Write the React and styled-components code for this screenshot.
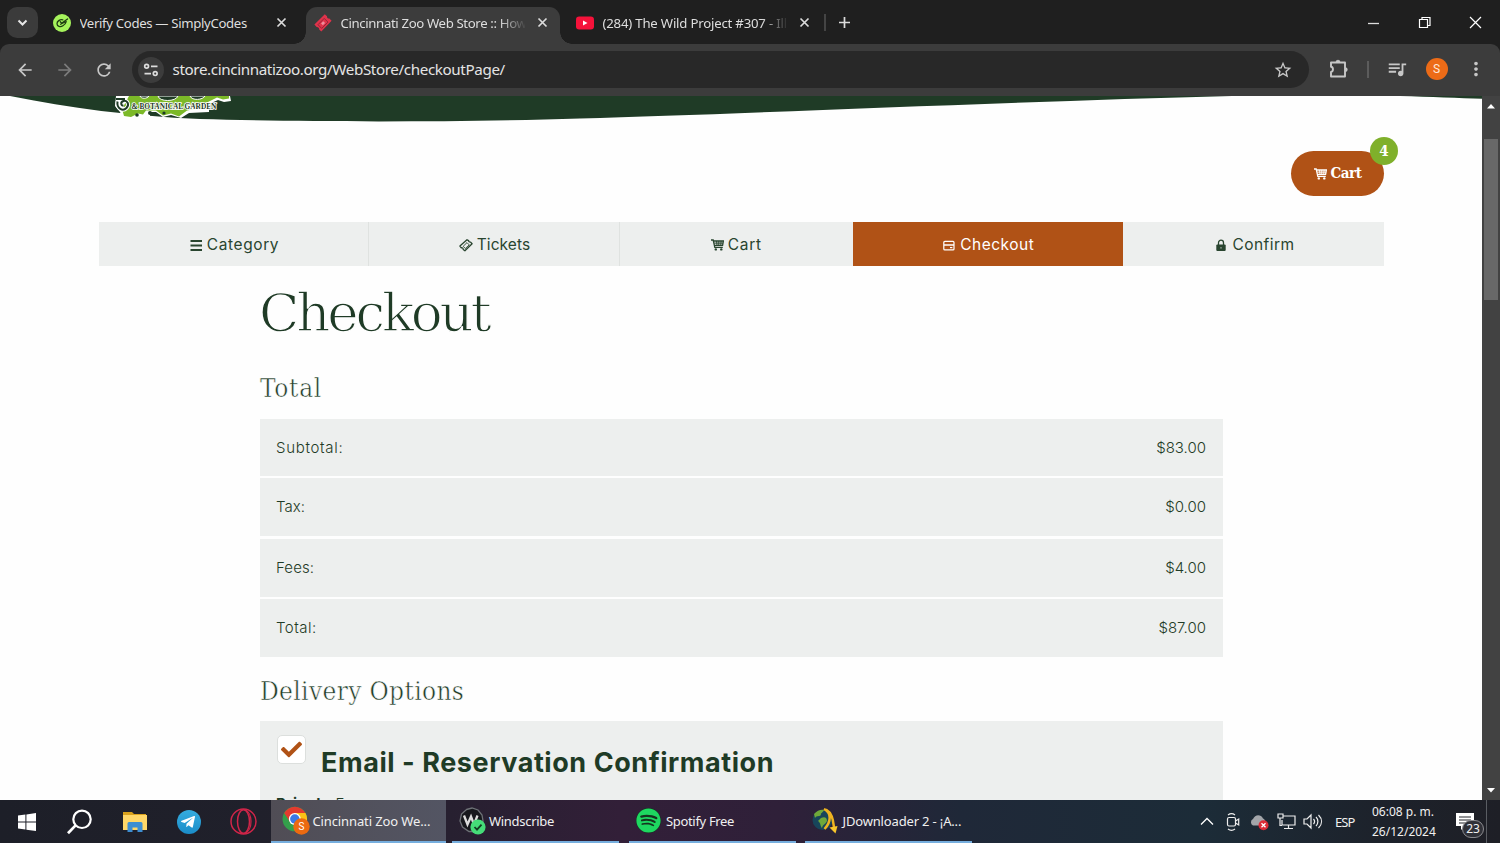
import React from "react";
import styled, { createGlobalStyle, css } from "styled-components";
import {
  MdArrowBack, MdArrowForward, MdRefresh, MdStarBorder, MdQueueMusic, MdMoreVert,
} from "react-icons/md";
import { FaSpotify, FaTelegramPlane, FaCheck } from "react-icons/fa";

const ui = `"Noto Sans", "Open Sans", sans-serif`;
const body = `Inter, Lato, sans-serif`;
const slab = `"DejaVu Serif Condensed", "DejaVu Serif", serif`;
const slabWide = `"DejaVu Serif", serif`;
const green = "#1f3b26";
const orange = "#b05216";
const panel = "#edefee";

const GlobalStyle = createGlobalStyle`
  *, *::before, *::after { box-sizing: border-box; }
  body { margin: 0; background: #fff; overflow: hidden; }
  svg { display: block; flex: none; }
`;

const Screen = styled.div`
  width: 1500px;
  height: 843px;
  display: flex;
  flex-direction: column;
  overflow: hidden;
`;

/* ---------- browser tabs ---------- */
const TabStrip = styled.div`
  height: 44px;
  flex: none;
  display: flex;
  align-items: flex-start;
  background: #1f1f1f;
  padding-left: 7px;
  color: #dedede;
  font-family: ${ui};
`;
const TabSearch = styled.div`
  width: 31px;
  height: 31px;
  margin-top: 7px;
  border-radius: 10px;
  background: #3b3b3b;
  display: grid;
  place-items: center;
`;
const Tab = styled.div`
  position: relative;
  width: ${(p) => p.$w}px;
  height: ${(p) => (p.$active ? 37 : 31)}px;
  margin: 7px 0 0 ${(p) => p.$ml}px;
  padding: 0 ${(p) => p.$pr || 10}px 0 ${(p) => p.$pl}px;
  display: flex;
  align-items: center;
  ${(p) => p.$active && css`
    background: #3c3c3c;
    border-radius: 11px 11px 0 0;
    padding-bottom: 6px;
    &::before, &::after {
      content: "";
      position: absolute;
      bottom: 0;
      width: 12px;
      height: 12px;
    }
    &::before { left: -12px; background: radial-gradient(circle at 0 0, transparent 11.5px, #3c3c3c 12px); }
    &::after { right: -12px; background: radial-gradient(circle at 100% 0, transparent 11.5px, #3c3c3c 12px); }
  `}
`;
const TabTitle = styled.div`
  width: ${(p) => p.$w}px;
  margin-left: 8.5px;
  padding-top: 1px;
  font-size: 13.2px;
  line-height: 31px;
  letter-spacing: ${(p) => p.$ls || 0}px;
  white-space: nowrap;
  overflow: hidden;
  ${(p) => p.$fade && css`mask-image: linear-gradient(90deg, #000 86%, transparent 101%);`}
`;
const TabClose = styled.div`
  margin-left: auto;
`;
const TabDivider = styled.div`
  width: 2px;
  height: 17px;
  margin: 14px 11px 0 4px;
  background: #444;
`;
const NewTab = styled.div`
  margin-top: 15px;
`;
const WindowButtons = styled.div`
  margin: 14px 17px 0 auto;
  display: flex;
  gap: 37px;
`;

/* ---------- browser toolbar ---------- */
const ToolbarBack = styled.div`
  flex: none;
  background: #1f1f1f;
`;
const Toolbar = styled.div`
  height: 52px;
  display: flex;
  align-items: center;
  background: #3c3c3c;
  border-radius: 9px 9px 0 0;
  padding: 0 12px 1px 15px;
  color: #c7c7c7;
`;
const NavButtons = styled.div`
  display: flex;
  gap: 19.5px;
`;
const Dim = styled.div`
  color: #7c7c7c;
`;
const Omnibox = styled.div`
  width: 1177px;
  height: 37px;
  margin-left: 18px;
  padding: 0 16px 0 6px;
  border-radius: 19px;
  background: #282828;
  display: flex;
  align-items: center;
`;
const SiteInfo = styled.div`
  width: 26px;
  height: 26px;
  border-radius: 50%;
  background: #3c3c3c;
  display: grid;
  place-items: center;
`;
const Url = styled.div`
  margin-left: 8.5px;
  padding-bottom: 1px;
  flex: 1;
  font: 15.2px/22px ${ui};
  letter-spacing: ${(p) => p.$ls}px;
  color: #e4e4e4;
`;
const ToolbarActions = styled.div`
  flex: 1;
  display: flex;
  align-items: center;
  justify-content: space-between;
  padding: 0 1px 1px 20px;
`;
const ToolbarDivider = styled.div`
  width: 2px;
  height: 17px;
  background: #5c5c5c;
`;
const Avatar = styled.div`
  width: 22px;
  height: 22px;
  border-radius: 50%;
  background: #ec6b17;
  color: #ffe9da;
  display: grid;
  place-items: center;
  font: 12px/1 Roboto, sans-serif;
`;

/* ---------- page ---------- */
const Viewport = styled.div`
  flex: 1;
  min-height: 0;
  display: flex;
  overflow: hidden;
`;
const Page = styled.div`
  width: 1482px;
  background: #fefefe;
  overflow: hidden;
  color: ${green};
`;
const Banner = styled.div`
  position: relative;
  height: 26px;
`;
const Logo = styled.div`
  position: absolute;
  left: 114px;
  top: 0;
`;
const CartRow = styled.div`
  display: flex;
  justify-content: flex-end;
  padding: 29px 98px 26.5px 0;
`;
const CartButton = styled.div`
  position: relative;
  width: 93px;
  height: 44.5px;
  border-radius: 22.5px;
  background: ${orange};
  color: #fff;
  display: flex;
  align-items: center;
  justify-content: center;
  gap: 4px;
  font: bold 15px/1 ${slab};
  letter-spacing: -0.5px;
`;
const Badge = styled.div`
  position: absolute;
  right: -14px;
  top: -14px;
  width: 28px;
  height: 28px;
  border-radius: 50%;
  background: #7fb02b;
  display: grid;
  place-items: center;
  letter-spacing: 0;
`;
const Steps = styled.div`
  display: flex;
  width: 1285px;
  height: 44px;
  margin-left: 99px;
`;
const Step = styled.div`
  width: ${(p) => p.$w}px;
  padding: 1px 0 0 ${(p) => p.$pl || 0}px;
  display: flex;
  align-items: center;
  justify-content: center;
  gap: ${(p) => p.$gap || 4}px;
  background: ${(p) => (p.$active ? orange : panel)};
  color: ${(p) => (p.$active ? "#fff" : "#29452f")};
  border-right: ${(p) => (p.$line ? "1px solid #dfe2e0" : "0")};
  font: 15.5px/1 ${body};
  letter-spacing: ${(p) => p.$ls || 0}px;
`;
const Main = styled.div`
  width: 963px;
  margin-left: 260px;
`;
const Title = styled.h1`
  margin: 0 0 0 -1px;
  padding-top: 15px;
  height: 102px;
  font: 400 53px/64px ${slabWide};
  letter-spacing: -3.2px;
  -webkit-text-stroke: 1.3px #fefefe;
`;
const Heading = styled.h2`
  margin: 0;
  height: ${(p) => p.$h}px;
  font: 400 26px/40px ${slab};
  letter-spacing: ${(p) => p.$ls}px;
  -webkit-text-stroke: 0.5px #fefefe;
`;
const Totals = styled.div`
  display: flex;
  flex-direction: column;
  gap: 2.5px;
  margin-bottom: 14px;
`;
const TotalRow = styled.div`
  height: ${(p) => p.$h}px;
  padding: 0 17px ${(p) => p.$pb}px 16px;
  display: flex;
  align-items: center;
  justify-content: space-between;
  background: ${panel};
  font: 300 15px/1 ${body};
`;
const RowLabel = styled.span`
  letter-spacing: ${(p) => p.$ls}px;
`;
const Delivery = styled.div`
  height: 120px;
  background: ${panel};
  padding: 14px 16px 0;
`;
const DeliveryOption = styled.div`
  display: flex;
  gap: 15px;
  padding-left: 1px;
`;
const CheckBox = styled.div`
  width: 29px;
  height: 29px;
  border: 1px solid #dcdfdd;
  border-radius: 5px;
  background: #fff;
  display: grid;
  place-items: center;
`;
const OptionName = styled.div`
  font: 700 27px/36px ${body};
  letter-spacing: ${(p) => p.$ls}px;
  padding-top: 10px;
`;
const OptionPrice = styled.div`
  margin-top: 13px;
  font: 300 15px/20px ${body};
  b { font-weight: 700; letter-spacing: 0.5px; }
`;
const ScrollBar = styled.div`
  width: 18px;
  background: #424242;
  display: flex;
  flex-direction: column;
  align-items: center;
  padding: 8px 0 7px;
`;
const Thumb = styled.div`
  width: 14px;
  height: 161px;
  margin: 30px 0 auto;
  background: #686868;
`;

/* ---------- taskbar ---------- */
const Taskbar = styled.div`
  height: 43px;
  flex: none;
  display: flex;
  background: linear-gradient(90deg, #1d1f28 0, #20202b 260px, #272030 450px, #321f38 620px, #2f2039 780px, #1f2838 960px, #1c2c38 1200px, #1d222b 1380px, #1e1f26 1500px);
  color: #f0f0f0;
  font-family: ${ui};
`;
const Pinned = styled.div`
  width: 54px;
  display: grid;
  place-items: center;
`;
const PinnedGroup = styled.div`
  display: flex;
  width: 271px;
`;
const Task = styled.div`
  width: ${(p) => p.$w}px;
  margin-right: ${(p) => p.$mr}px;
  padding-left: ${(p) => p.$pl}px;
  display: flex;
  align-items: center;
  gap: ${(p) => p.$gap || 3}px;
  border-bottom: 2px solid #76aede;
  background: ${(p) => (p.$active ? "linear-gradient(90deg,#504d55,#535563)" : "transparent")};
  font-size: 13px;
  line-height: 20px;
  letter-spacing: ${(p) => p.$ls || 0}px;
  white-space: nowrap;
`;
const Tray = styled.div`
  margin-left: auto;
  display: flex;
  align-items: center;
`;
const TrayIcons = styled.div`
  display: flex;
  align-items: center;
  gap: 7px;
`;
const Lang = styled.div`
  width: 21px;
  margin-left: 12px;
  font-size: 13px;
  letter-spacing: -0.9px;
`;
const Clock = styled.div`
  width: 66px;
  margin: 0 18px 0 16px;
  font-size: 12px;
  line-height: 20px;
  text-align: left;
  white-space: nowrap;
`;
const Notice = styled.div`
  position: relative;
  width: 30px;
  height: 43px;
  padding-top: 13px;
`;
const NoticeCount = styled.div`
  position: absolute;
  left: 6px;
  top: 20px;
  width: 22px;
  height: 18px;
  border-radius: 9px;
  border: 1px solid #8b8b8f;
  background: #303138;
  font-size: 12px;
  line-height: 16px;
  text-align: center;
`;
const ShowDesktop = styled.div`
  width: 14px;
  height: 43px;
  border-left: 1px solid #5a5d63;
  align-self: stretch;
`;

/* ---------- drawings ---------- */
const Close = () => (
  <svg width="11" height="11" viewBox="0 0 11 11" stroke="#dcdcdc" strokeWidth="1.7"><path d="M1.500 1.500l8 8M9.500 1.500l-8 8" /></svg>
);
const CartIcon = ({ size = 13 }) => (
  <svg width={size} height={size} viewBox="0 0 13 13" fill="none" stroke="currentColor" strokeWidth="1.300">
    <path d="M0 2h2.200l1.600 7.300h8" /><path d="M2.700 3h9.700l-.8 4.300H3.600" /><path d="M3.200 5.100h8.800M5.600 3l.4 4M7.800 3v4M10.100 3l-.3 4" strokeWidth="1" />
    <circle cx="4.800" cy="11.400" r="1.200" fill="currentColor" stroke="none" /><circle cx="10.300" cy="11.400" r="1.200" fill="currentColor" stroke="none" />
  </svg>
);
const MenuIcon = () => (
  <svg width="12" height="12" viewBox="0 0 12 12" fill="currentColor"><path d="M.5 1h11.500v2H.5zM.5 5.500h11.500v2H.5zM.5 10h11.500v2H.5z" /></svg>
);
const TicketIcon = () => (
  <svg width="14" height="14" viewBox="0 0 14 14" fill="none" stroke="currentColor" strokeWidth="1.300" strokeLinejoin="round">
    <path d="M.9 8.100L8 1.700l1.600.9c.1 1.100.9 1.700 2 1.500l1.500 1.700-7.200 7-1.700-1.300c.1-1.200-.8-1.900-1.900-1.700z" />
    <path d="M4.200 8.300L8 4.600l2.200 2.300-3.900 3.600z" strokeWidth=".9" />
  </svg>
);
const CardIcon = () => (
  <svg width="12" height="12" viewBox="0 0 12 12" fill="none" stroke="currentColor" strokeWidth="1.200">
    <rect x=".8" y="2.400" width="10.200" height="8.500" rx="1" /><path d="M1 6h10" strokeWidth="1.500" /><path d="M7 8.600h2.400" />
  </svg>
);
const LockIcon = () => (
  <svg width="10" height="12" viewBox="0 0 10 12"><path d="M2.500 6V3.700a2.500 2.500 0 015 0V6" fill="none" stroke="currentColor" strokeWidth="1.300" /><rect x=".3" y="5.500" width="9.400" height="6.500" rx="1" fill="currentColor" /><path d="M4 8.900h2" stroke="#9aa69d" /></svg>
);
const TuneIcon = () => (
  <svg width="16" height="16" viewBox="0 0 16 16" fill="none" stroke="#dcdcdc" strokeWidth="1.700">
    <circle cx="3.600" cy="4.300" r="1.900" /><path d="M8 4.300h6.500M1.500 11.600H8" /><circle cx="12.200" cy="11.600" r="1.900" />
  </svg>
);
const PuzzleIcon = () => (
  <svg width="20" height="20" viewBox="0 0 20 20" fill="none" stroke="currentColor" strokeWidth="1.900" strokeLinejoin="round">
    <path d="M2 3.500h14v14H2v-4.600c2.600-.2 2.600-5 0-5.200z" /><path d="M6.800 3.200a2.200 2.200 0 014.400 0zM16.300 8.400a2.200 2.200 0 010 4.400z" fill="currentColor" strokeWidth=".3" />
  </svg>
);
const SimplyIcon = () => (
  <svg width="18" height="18" viewBox="0 0 18 18"><circle cx="9" cy="9" r="9" fill="#a6f35c" />
    <path d="M14.500 5L8.600 9.300 7.300 7.800M9.800 5.800C6.700 5.300 4 7.200 4 9.700c0 2.700 3.500 3.600 5.900 2.100 1.800-1.100 2.900-2.600 3.300-4.200M7.600 10.300l4.400-2.400" fill="none" stroke="#1f3d12" strokeWidth="1.300" strokeLinecap="round" /></svg>
);
const ZooTicket = () => (
  <svg width="18" height="18" viewBox="0 0 18 18"><path d="M.4 10.600L10.800.3l2.200 2c-.2 1.400 1 2.500 2.400 2.300l2.200 2.200L7.300 17.600l-2.100-2.100c.2-1.500-1-2.600-2.500-2.500z" fill="#e0334b" />
    <path d="M4 10.700l6.200-6.300 3.700 3.700-6.200 6.300z" fill="none" stroke="#8a2435" strokeWidth=".9" /><path d="M7 9.400l2.200-2.200 1.900 1.900-2.200 2.200z" fill="#ee8e9b" /></svg>
);
const YouTube = () => (
  <svg width="18" height="14" viewBox="0 0 18 14"><rect width="18" height="13" y=".5" rx="3.200" fill="#f5123a" /><path d="M7 4.500v5L11.500 7z" fill="#fff" /></svg>
);
const BannerWave = () => (
  <svg width="1482" height="26" viewBox="0 0 1482 26">
    <path d="M10 0C70 12 130 20 200 23C300 26 450 26.500 580 22.500C740 18 1000 6 1232 0z" fill={green} />
    <path d="M1400 0C1430 1 1460 2 1482 2.800V0z" fill={green} />
  </svg>
);
const LogoText = styled.text`
  font: bold 7.5px "Liberation Serif", serif;
`;
const ZooLogo = () => (
  <svg width="118" height="24" viewBox="0 0 118 24">
    <path d="M2 0H116l1 5-7 1-6-2-9 4v8l-20 1-8 5-10-3-8 2-7-5-6 0 0 5-7 1-5-2-7 3-8-1-3-6-5-6z" fill="#fff" />
    <path d="M15 0H115v2.500l-6 1-6-2-10 5-4 5-16 3-8 6-8-3-8 2-7-5-6 0-4 0-3 4-5-1-7 3.500-7-1-2-7z" fill="#7cb928" />
    <path d="M26 0c1 3 7 3 9 0zM44 0c1 6 18 6 20 0zM76 0c2 5 13 4 15 0z" fill={green} stroke="#fff" strokeWidth="1" />
    <circle cx="36" cy="17" r="2" fill={green} /><circle cx="23" cy="19" r="1.800" fill={green} /><circle cx="50" cy="17" r="1.600" fill={green} />
    <path d="M2 3h9M3.500 5.500C2.500 13 9 15.500 12.500 12S13 4 9.500 5 7 10 9.500 9.500" fill="none" stroke="#fff" strokeWidth="4" />
    <path d="M2 3h9M3.500 5.500C2.500 13 9 15.500 12.500 12S13 4 9.500 5 7 10 9.500 9.500" fill="none" stroke={green} strokeWidth="2" />
    <LogoText x="17.500" y="13.400" textLength="85" fill={green} stroke="#fff" strokeWidth="1.600" paintOrder="stroke">&amp; BOTANICAL GARDEN</LogoText>
  </svg>
);
const Windows = () => (
  <svg width="18" height="18" viewBox="0 0 18 18" fill="#fff"><path d="M0 2.600l7.400-1v7H0zM8.400 1.400L18 0v8.600H8.400zM0 9.600h7.400v7L0 15.500zM8.400 9.600H18V18l-9.600-1.300z" /></svg>
);
const SearchIcon = () => (
  <svg width="30" height="26" viewBox="0 0 30 26" fill="none" stroke="#fff" strokeWidth="2.200"><circle cx="16" cy="10.300" r="8.700" /><path d="M9.600 16.400L2 24.300" strokeWidth="2.700" /></svg>
);
const Folder = () => (
  <svg width="24" height="22" viewBox="0 0 24 22"><path d="M0 1h9l2 2h12v5H0z" fill="#d9a11c" /><path d="M0 4h24v15H0z" fill="#ffd768" /><path d="M4.500 21v-8.500q0-1.500 1.500-1.500h12q1.500 0 1.500 1.500V21h-5v-4.500h-5V21z" fill="#3d8ed2" /></svg>
);
const TelegramBall = styled.div`
  width: 24px;
  height: 24px;
  border-radius: 50%;
  background: linear-gradient(#35acdf, #1b8dc9);
  color: #fff;
  display: grid;
  place-items: center;
  padding-right: 2px;
`;
const Opera = () => (
  <svg width="27" height="27" viewBox="0 0 27 27" fill="none" stroke="#d02549" strokeWidth="1.500"><circle cx="13.500" cy="13.500" r="12.500" /><ellipse cx="13.500" cy="13.500" rx="6" ry="11.800" /><path d="M15 2c8 2 8 21 0 23" strokeWidth="1.200" /></svg>
);
const SvgLetter = styled.text`
  font: 10px Roboto, sans-serif;
`;
const Chrome = () => (
  <svg width="29" height="29" viewBox="0 0 29 29">
    <circle cx="12.800" cy="13" r="12.300" fill="#34a04b" /><path d="M2.200 6.900A12.300 12.300 0 0123.500 6.900H12.800L8 16z" fill="#e33b2e" /><path d="M12.800 6.900h10.700A12.300 12.300 0 0112.800 25.300l5.300-9.200z" fill="#fbc116" />
    <circle cx="12.800" cy="13" r="6" fill="#fff" /><circle cx="12.800" cy="13" r="4.700" fill="#3b79e6" />
    <circle cx="19.500" cy="20.500" r="8.200" fill="#ec6a10" /><SvgLetter x="16.600" y="24" fill="#fff">S</SvgLetter>
  </svg>
);
const Windscribe = () => (
  <svg width="27" height="28" viewBox="0 0 27 28"><path d="M7.500 2.500L13 1l6 2 4 5 1 6-3 7-6 3.500h-5L3.500 20 1 14l1.500-7z" fill="#17181d" stroke="#6e7277" strokeWidth="1.300" />
    <path d="M5 8.500l3.500 9 3.500-8 3 8 3.500-9" fill="none" stroke="#dcdcdc" strokeWidth="2.300" />
    <circle cx="19" cy="20" r="7.600" fill="#45dc78" /><path d="M15.500 20l2.500 2.600 4.500-5" fill="none" stroke="#123d22" strokeWidth="1.800" /></svg>
);
const JD = () => (
  <svg width="26" height="26" viewBox="0 0 26 26"><circle cx="10.500" cy="12" r="10" fill="#17455a" /><path d="M2 6c3-4 8-5 10-4-1 3-4 3-3 5-2 2-4 0-6 3zM9 10c4-2 6 0 6 3-2 4-4 3-5 7-2-2-1-5-4-7z" fill="#6fa83a" />
    <path d="M12 1c8 4 7 13 .5 20 M14 1.500c7 4 7 12 8 18" fill="none" stroke="#eeb320" strokeWidth="2.500" /><path d="M17.500 19.500l8-1.500-2 7.500z" fill="#f8c62b" /></svg>
);
const PlayBall = styled.div`
  width: 25px;
  height: 25px;
  border-radius: 50%;
  background: #15331f;
  color: #1ed760;
  display: grid;
  place-items: center;
`;
const TrayGlyphs = () => (
  <>
    <svg width="15" height="9" viewBox="0 0 15 9" fill="none" stroke="#fff" strokeWidth="1.300"><path d="M1 7.500l6-6 6 6" /></svg>
    <svg width="20" height="20" viewBox="0 0 20 20" fill="none" stroke="#eee" strokeWidth="1.200"><rect x="5.500" y="5.500" width="8" height="8.500" rx="1.500" /><path d="M13.500 9l3.200-2v6l-3.200-2M6 3c2-1.500 5-1.500 7 0M6 17c2 1.500 5 1.500 7 0" /></svg>
    <svg width="20" height="18" viewBox="0 0 20 18"><path d="M4 12.500a3.600 3.600 0 010-6.500C6 1 12 1 14 5.500c3 1 3 6.500 0 7z" fill="#a3a5a9" /><circle cx="14.500" cy="12.200" r="5" fill="#dc2c38" /><path d="M12.500 10.200l4 4M16.500 10.200l-4 4" stroke="#fff" strokeWidth="1.300" /></svg>
    <svg width="20" height="17" viewBox="0 0 20 17" fill="none" stroke="#eee" strokeWidth="1.200"><path d="M7 3h12v9H6V7M12.500 12v3.500M8 15.500h9M2 1h5v4H2zM4 5v7.500h2" /></svg>
    <svg width="20" height="17" viewBox="0 0 20 17" fill="none" stroke="#eee" strokeWidth="1.200"><path d="M1 6h3l4-4v13l-4-4H1zM10.500 6c1.300 1.500 1.300 3.500 0 5M13 4c2.500 2.500 2.500 6.500 0 9M15.500 2c4 4 4 9 0 13" /></svg>
  </>
);
const Arrow = ({ down }) => (
  <svg width="8" height="5" viewBox="0 0 8 5" fill="#fff"><path d={down ? "M0 0h8L4 4.500z" : "M0 4.500h8L4 0z"} /></svg>
);

export default function App() {
  return (
    <Screen>
      <GlobalStyle />
      <TabStrip>
        <TabSearch><svg width="11" height="8" viewBox="0 0 11 8" fill="none" stroke="#e6e6e6" strokeWidth="2"><path d="M1.500 1.500l4 4 4-4" /></svg></TabSearch>
        <Tab $w={254} $ml={5} $pl={10}><SimplyIcon /><TabTitle $w={180} $ls={-0.34}>Verify Codes — SimplyCodes</TabTitle><TabClose><Close /></TabClose></Tab>
        <Tab $w={254} $ml={9} $pl={8} $pr={12} $active><ZooTicket /><TabTitle $w={184} $ls={-0.36} $fade>Cincinnati Zoo Web Store :: How to</TabTitle><TabClose><Close /></TabClose></Tab>
        <Tab $w={260} $ml={0} $pl={16}><YouTube /><TabTitle $w={184} $ls={-0.2} $fade>(284) The Wild Project #307 - Illojuan</TabTitle><TabClose><Close /></TabClose></Tab>
        <TabDivider />
        <NewTab><svg width="15" height="15" viewBox="0 0 15 15" stroke="#dcdcdc" strokeWidth="1.700"><path d="M7.500 2v11M2 7.500h11" /></svg></NewTab>
        <WindowButtons>
          <svg width="14" height="16" viewBox="0 0 14 16" stroke="#ddd" strokeWidth="1.300"><path d="M1 9.500h11" /></svg>
          <svg width="14" height="16" viewBox="0 0 14 16" fill="none" stroke="#fff" strokeWidth="1.200"><path d="M1.500 5.500h8v8h-8zM4 5.500V3.500h8v8H9.500" /></svg>
          <svg width="14" height="16" viewBox="0 0 14 16" stroke="#fff" strokeWidth="1.200"><path d="M1 3l11 11M12 3l-11 11" /></svg>
        </WindowButtons>
      </TabStrip>
      <ToolbarBack>
        <Toolbar>
          <NavButtons><MdArrowBack size={20} /><Dim><MdArrowForward size={20} /></Dim><MdRefresh size={20} /></NavButtons>
          <Omnibox>
            <SiteInfo><TuneIcon /></SiteInfo>
            <Url $ls={-0.38}>store.cincinnatizoo.org/WebStore/checkoutPage/</Url>
            <MdStarBorder size={20} />
          </Omnibox>
          <ToolbarActions>
            <PuzzleIcon /><ToolbarDivider /><MdQueueMusic size={22} /><Avatar>S</Avatar><MdMoreVert size={22} />
          </ToolbarActions>
        </Toolbar>
      </ToolbarBack>
      <Viewport>
        <Page>
          <Banner><BannerWave /><Logo><ZooLogo /></Logo></Banner>
          <CartRow><CartButton><CartIcon /><span>Cart</span><Badge>4</Badge></CartButton></CartRow>
          <Steps>
            <Step $w={270} $ls={0.6} $pl={2} $gap={5} $line><MenuIcon />Category</Step>
            <Step $w={251} $ls={0.1} $pl={1} $line><TicketIcon />Tickets</Step>
            <Step $w={232.5} $ls={0.7}><CartIcon />Cart</Step>
            <Step $w={270.5} $ls={0.5} $pl={2} $gap={5} $active><CardIcon />Checkout</Step>
            <Step $w={261} $ls={0.45} $pl={4} $gap={6}><LockIcon />Confirm</Step>
          </Steps>
          <Main>
            <Title>Checkout</Title>
            <Heading $h={51} $ls={0.7}>Total</Heading>
            <Totals>
              <TotalRow $h={56.5} $pb={0}><RowLabel $ls={0.7}>Subtotal:</RowLabel><span>$83.00</span></TotalRow>
              <TotalRow $h={58} $pb={1}><RowLabel $ls={0}>Tax:</RowLabel><span>$0.00</span></TotalRow>
              <TotalRow $h={58} $pb={1}><RowLabel $ls={0.1}>Fees:</RowLabel><span>$4.00</span></TotalRow>
              <TotalRow $h={58} $pb={1}><RowLabel $ls={0.5}>Total:</RowLabel><span>$87.00</span></TotalRow>
            </Totals>
            <Heading $h={50} $ls={0.35}>Delivery Options</Heading>
            <Delivery>
              <DeliveryOption><CheckBox><FaCheck size={21} color={orange} /></CheckBox><OptionName $ls={0.56}>Email - Reservation Confirmation</OptionName></DeliveryOption>
              <OptionPrice><b>Private</b> Free</OptionPrice>
            </Delivery>
          </Main>
        </Page>
        <ScrollBar><Arrow /><Thumb /><Arrow down /></ScrollBar>
      </Viewport>
      <Taskbar>
        <PinnedGroup>
          <Pinned><Windows /></Pinned><Pinned><SearchIcon /></Pinned><Pinned><Folder /></Pinned>
          <Pinned><TelegramBall><FaTelegramPlane size={16} /></TelegramBall></Pinned><Pinned><Opera /></Pinned>
        </PinnedGroup>
        <Task $w={175} $mr={6} $pl={11} $gap={1.5} $ls={-0.12} $active><Chrome />Cincinnati Zoo We...</Task>
        <Task $w={167} $mr={10} $pl={7} $ls={-0.3}><Windscribe />Windscribe</Task>
        <Task $w={167} $mr={9} $pl={7} $gap={5} $ls={-0.33}><PlayBall><FaSpotify size={25} /></PlayBall>Spotify Free</Task>
        <Task $w={167} $mr={0} $pl={7} $gap={4.5} $ls={-0.16}><JD />JDownloader 2 - ¡A...</Task>
        <Tray>
          <TrayIcons><TrayGlyphs /></TrayIcons>
          <Lang>ESP</Lang>
          <Clock>06:08 p. m.<br />26/12/2024</Clock>
          <Notice>
            <svg width="18" height="17" viewBox="0 0 18 17"><path d="M0 0h18v13H9l-4 4v-4H0z" fill="#fff" /><path d="M3 4h12M3 7h12M3 10h8" stroke="#25262d" strokeWidth="1.200" /></svg>
            <NoticeCount>23</NoticeCount>
          </Notice>
          <ShowDesktop />
        </Tray>
      </Taskbar>
    </Screen>
  );
}
